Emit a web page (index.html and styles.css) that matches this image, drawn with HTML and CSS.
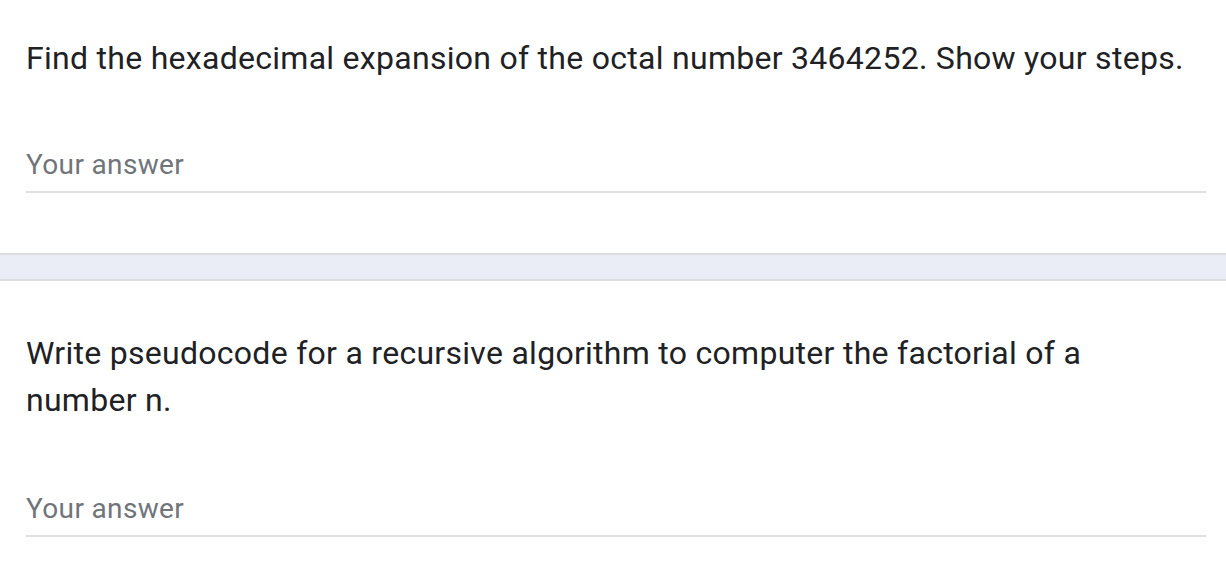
FILE: index.html
```html
<!DOCTYPE html>
<html lang="en">
<head>
<meta charset="utf-8">
<title>Form</title>
<link rel="stylesheet" href="styles.css">
</head>
<body>
<main class="form">
  <section class="card card-first">
    <div class="question-title">Find the hexadecimal expansion of the octal number 3464252. Show your steps.</div>
    <div class="answer">Your answer</div>
  </section>
  <section class="card card-second">
    <div class="question-title">Write pseudocode for a recursive algorithm to computer the factorial of a number n.</div>
    <div class="answer">Your answer</div>
  </section>
</main>
</body>
</html>
```
FILE: styles.css
```css
html, body {
  margin: 0;
  padding: 0;
}
body {
  background: #ebedf6;
  width: 1226px;
  height: 570px;
  overflow: hidden;
}
.form {
  display: flex;
  flex-direction: column;
  gap: 24px;
}
.card {
  background: #ffffff;
  padding: 0 20px 0 26px;
}
.card-first {
  padding-top: 35px;
  padding-bottom: 60px;
  border-bottom: 2px solid #dadce0;
}
.card-second {
  padding-top: 49px;
  padding-bottom: 40px;
  border-top: 2px solid #dadce0;
}
.question-title {
  font-family: Roboto, "Liberation Sans", sans-serif;
  font-size: 32px;
  line-height: 47px;
  letter-spacing: 0.28px;
  color: #202124;
  font-weight: 400;
  padding-right: 15px;
}
.answer {
  margin-top: 67px;
  font-family: Roboto, "Liberation Sans", sans-serif;
  font-size: 28px;
  line-height: 32px;
  letter-spacing: 0.35px;
  color: #70757a;
  padding-bottom: 10px;
  border-bottom: 2px solid #e0e0e0;
}
.card-second .answer {
  margin-top: 69px;
}
```
